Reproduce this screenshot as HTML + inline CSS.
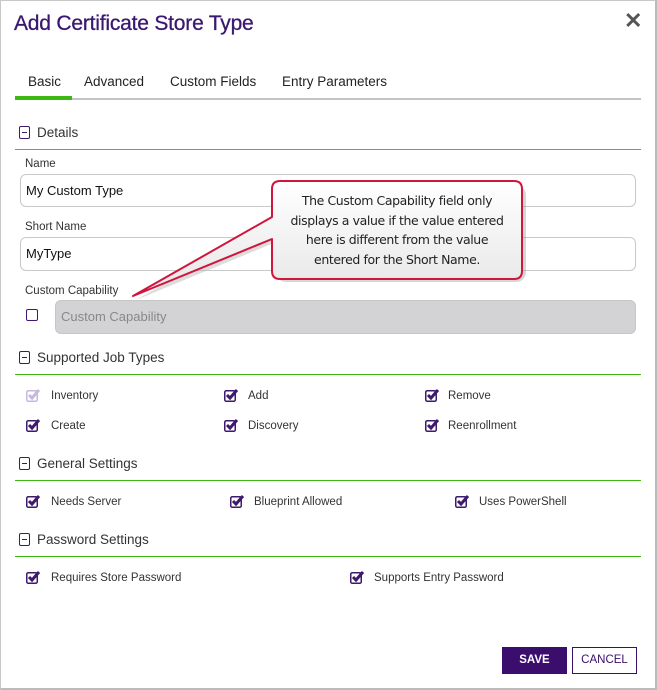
<!DOCTYPE html><html><head><style>
body{margin:0;width:657px;height:690px;background:#fff;font-family:"Liberation Sans",sans-serif;position:relative;overflow:hidden}
.a{position:absolute}
.dlg{left:0;top:0;width:654px;height:687px;border:1px solid #c8c8c8;border-right:2px solid #bbb;border-bottom:2px solid #bbb}
.t{font-size:13px;color:#222}
.lbl{font-size:11.5px;color:#333}
.inp{border:1px solid #c9c9c9;border-radius:6px;background:#fff;font-size:13px;color:#111;box-sizing:border-box;padding-left:5px}
.sec{font-size:13.5px;color:#333}
.box{width:10px;height:10px;border:1.5px solid #3d1a6e;border-radius:2px}
.line{height:1px;background:#3db812;left:15px;width:626px}
</style></head><body>
<div class="a dlg"></div>
<div class="a" style="left:14px;top:12px;font-size:21px;color:#3a1870;letter-spacing:-0.2px;-webkit-text-stroke:0.3px #3a1870">Add Certificate Store Type</div>
<div class="a" style="left:624px;top:8px;font-size:22px;font-weight:bold;color:#555">✕</div>
<div class="a t" style="left:28px;top:74px;font-size:13.5px">Basic</div>
<div class="a t" style="left:84px;top:74px;font-size:13.5px">Advanced</div>
<div class="a t" style="left:170px;top:74px;font-size:13.5px">Custom Fields</div>
<div class="a t" style="left:282px;top:74px;font-size:13.5px">Entry Parameters</div>
<div class="a" style="left:15px;top:98px;width:626px;height:2px;background:#c4c4c8"></div>
<div class="a" style="left:15px;top:96px;width:57px;height:4px;background:#3db812"></div>

<div class="a box" style="left:19px;top:126px;width:9px;height:11px;border-width:1px"><div style="position:absolute;left:2px;top:5px;width:5px;height:1px;background:#3d1a6e"></div></div>
<div class="a sec" style="left:37px;top:125px">Details</div>
<div class="a line" style="top:149px;background:#6aa84f"></div>
<div class="a lbl" style="left:25px;top:158px">Name</div>
<div class="a inp" style="left:20px;top:174px;width:616px;height:33px;line-height:31px">My Custom Type</div>
<div class="a lbl" style="left:25px;top:221px">Short Name</div>
<div class="a inp" style="left:20px;top:237px;width:616px;height:34px;line-height:32px">MyType</div>
<div class="a lbl" style="left:25px;top:285px">Custom Capability</div>
<div class="a box" style="left:26px;top:309px"></div>
<div class="a inp" style="left:55px;top:300px;width:581px;height:34px;line-height:32px;background:#d3d3d6;color:#888;border-color:#c6c6c9">Custom Capability</div>

<div class="a box" style="left:19px;top:351px;width:9px;height:11px;border-width:1px"><div style="position:absolute;left:2px;top:5px;width:5px;height:1px;background:#3d1a6e"></div></div>
<div class="a sec" style="left:37px;top:350px">Supported Job Types</div>
<div class="a line" style="top:374px"></div>

<div class="a box" style="left:19px;top:457px;width:9px;height:11px;border-width:1px"><div style="position:absolute;left:2px;top:5px;width:5px;height:1px;background:#3d1a6e"></div></div>
<div class="a sec" style="left:37px;top:456px">General Settings</div>
<div class="a line" style="top:480px"></div>

<div class="a box" style="left:19px;top:533px;width:9px;height:11px;border-width:1px"><div style="position:absolute;left:2px;top:5px;width:5px;height:1px;background:#3d1a6e"></div></div>
<div class="a sec" style="left:37px;top:532px">Password Settings</div>
<div class="a line" style="top:556px"></div>

<svg class="a" style="left:0;top:0" width="657" height="690">
<defs><g id="c"><rect x="0.75" y="2.75" width="10.5" height="10.5" rx="1.5" fill="none" stroke="currentColor" stroke-width="1.5"/><path d="M3 7l3 3l7-8" fill="none" stroke="currentColor" stroke-width="3"/></g></defs>
<g color="#3d1a6e">
<use href="#c" x="26" y="388" style="color:#c7b8dd"/>
<use href="#c" x="224" y="388"/><use href="#c" x="425" y="388"/>
<use href="#c" x="26" y="418"/><use href="#c" x="224" y="418"/><use href="#c" x="425" y="418"/>
<use href="#c" x="26" y="494"/><use href="#c" x="230" y="494"/><use href="#c" x="455" y="494"/>
<use href="#c" x="26" y="570"/><use href="#c" x="350" y="570"/>
</g>
<defs><linearGradient id="g" x1="0" y1="0" x2="0" y2="1"><stop offset="0" stop-color="#fff"/><stop offset="1" stop-color="#e6e6e6"/></linearGradient></defs>
<path d="M136 300 L276 220 L276 242 Z" fill="#bbb" opacity="0.5"/>
<rect x="276" y="185" width="250" height="97" rx="10" fill="#999" opacity="0.4"/>
<path d="M283 181 H514 Q522 181 522 189 V271 Q522 279 514 279 H280 Q272 279 272 271 V239 L133 296 L272 217 V189 Q272 181 280 181 Z" fill="url(#g)" stroke="#d0163c" stroke-width="2" stroke-linejoin="round"/>
</svg>
<div class="a" style="left:272px;top:191px;width:250px;text-align:center;font-family:'DejaVu Sans',sans-serif;font-size:12.5px;line-height:19.5px;color:#222;letter-spacing:-0.4px">The Custom Capability field only<br>displays a value if the value entered<br>here is different from the value<br>entered for the Short Name.</div>

<div class="a lbl" style="left:51px;top:390px">Inventory</div>
<div class="a lbl" style="left:248px;top:390px">Add</div>
<div class="a lbl" style="left:448px;top:390px">Remove</div>
<div class="a lbl" style="left:51px;top:420px">Create</div>
<div class="a lbl" style="left:248px;top:420px">Discovery</div>
<div class="a lbl" style="left:448px;top:420px">Reenrollment</div>
<div class="a lbl" style="left:51px;top:496px">Needs Server</div>
<div class="a lbl" style="left:254px;top:496px">Blueprint Allowed</div>
<div class="a lbl" style="left:479px;top:496px">Uses PowerShell</div>
<div class="a lbl" style="left:51px;top:572px">Requires Store Password</div>
<div class="a lbl" style="left:374px;top:572px">Supports Entry Password</div>

<div class="a" style="left:502px;top:647px;width:65px;height:27px;background:#3b0e6e;color:#fff;font-size:11.5px;font-weight:bold;text-align:center;line-height:27px">SAVE</div>
<div class="a" style="left:572px;top:647px;width:63px;height:25px;border:1px solid #3b0e6e;color:#3b0e6e;font-size:11.5px;text-align:center;line-height:25px">CANCEL</div>
</body></html>
